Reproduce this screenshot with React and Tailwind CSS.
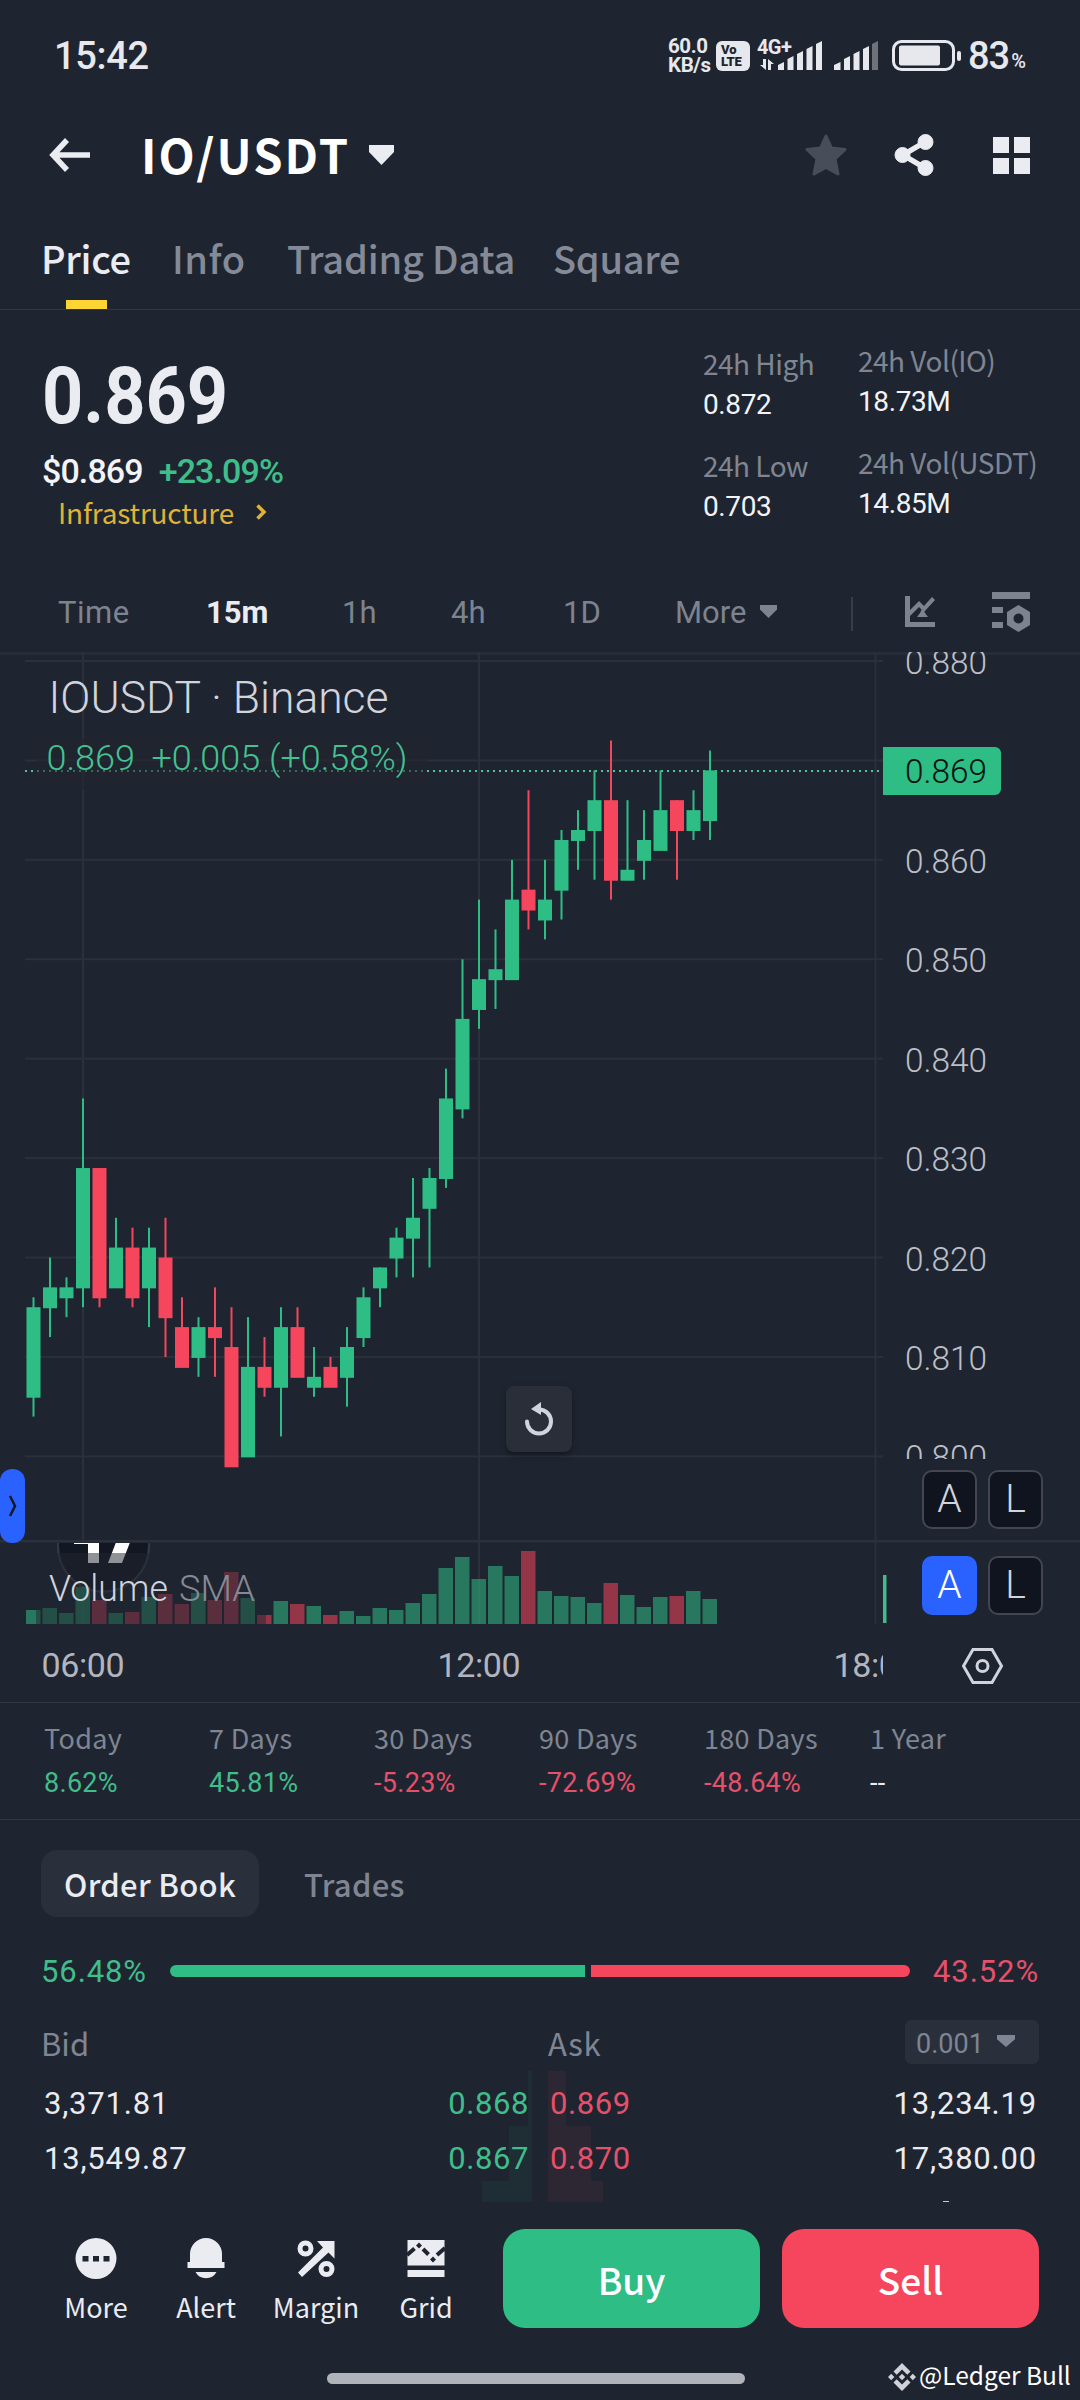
import React from 'react';

// i-th entry: open, close, high, low (in thousandths) and volume bar height
const CANDLES = [
  [806, 815, 816, 804, 14], [815, 817, 820, 812, 16], [816, 817, 818, 814, 11],
  [817, 829, 836, 815, 37], [829, 816, 829, 815, 24], [817, 821, 824, 817, 11],
  [821, 816, 823, 815, 12], [817, 821, 823, 813, 27], [820, 814, 824, 810, 30],
  [813, 809, 816, 809, 20], [810, 813, 814, 808, 31], [813, 812, 817, 808, 24],
  [811, 799, 815, 799, 52], [800, 809, 814, 800, 26], [809, 807, 812, 806, 9],
  [807, 813, 815, 802, 23], [813, 808, 815, 808, 20], [807, 808, 811, 806, 18],
  [809, 807, 810, 807, 9], [808, 811, 813, 805, 13], [812, 816, 817, 811, 8],
  [817, 819, 819, 815, 16], [820, 822, 823, 818, 14], [822, 824, 828, 818, 21],
  [825, 828, 829, 819, 30], [828, 836, 839, 827, 56], [835, 844, 850, 834, 67],
  [845, 848, 856, 843, 45], [848, 849, 853, 845, 58], [848, 856, 860, 848, 48],
  [857, 855, 867, 853, 73], [854, 856, 860, 852, 33], [857, 862, 863, 854, 28],
  [862, 863, 865, 859, 27], [863, 866, 869, 858, 21], [866, 858, 872, 856, 41],
  [858, 859, 866, 858, 29], [860, 862, 865, 858, 17], [861, 865, 869, 861, 27],
  [866, 863, 866, 858, 28], [863, 865, 867, 862, 33], [864, 869, 871, 862, 25],
];

const PRICE_TICKS = [880, 870, 860, 850, 840, 830, 820, 810, 800];
const TIME_TICKS = [83, 479, 875.5];

const GREEN = '#2ebd85';
const RED = '#f6465d';

const priceToY = (p) => 9 + (880 - p) * 9.942;
const candleX = (i) => 33.5 + i * 16.5;

const Caret = ({ className }) => (
  <svg className={className} viewBox="0 0 25 20" preserveAspectRatio="none" fill="currentColor">
    <path d="M0 0h25v7L12.5 20 0 7z" />
  </svg>
);

const StatusBar = () => (
  <div className="flex h-[111px] items-center pl-[54px] font-['Roboto',sans-serif] text-[#e6e8ee]">
    <span className="w-[614px] text-[38px] leading-none font-medium tracking-[-0.3px]">15:42</span>
    <div className="w-[48px] text-[20.5px] leading-[19px] font-bold tracking-[-0.4px]">
      <div>60.0</div>
      <div>KB/s</div>
    </div>
    <div className="h-[30px] w-[34px] rounded-[6px] bg-[#e6e8ee] pt-[3px] pl-[5px] text-[13px] leading-[12px] font-black text-[#1f2530]">
      <div>Vo</div>
      <div className="tracking-[-0.2px]">LTE</div>
    </div>
    <div className="relative ml-[7px] h-[34px] w-[69px]">
      <span className="absolute top-[-1px] left-0 text-[20px] leading-[18px] font-bold tracking-[-0.6px]">4G+</span>
      <svg className="h-[34px] w-[69px]" viewBox="0 0 69 34" fill="currentColor">
        <path d="M6 20h3v11L3 26h3zM11 31V20l6 5h-3v6z" />
        <path d="M21 31v-5l6-3v8zM30.500 31V20l6-3v14zM40 31V15l6-3v19zM49.500 31V10l6-3v24zM59 31V5l6-3v29z" />
      </svg>
    </div>
    <svg className="ml-[8px] h-[34px] w-[46px]" viewBox="0 0 46 34" fill="currentColor">
      <path d="M0 31v-5l6.500-3v8zM10 31V20l6-3v14zM19.500 31V15l6-3v19zM29 31V10l6-3v24z" />
      <path d="M38 31V5l6-3v29z" opacity="0.4" />
    </svg>
    <svg className="ml-[12px] h-[34px] w-[70px]" viewBox="0 0 70 34" fill="none">
      <rect x="1.5" y="2.500" width="60" height="28" rx="8" stroke="currentColor" strokeWidth="3" />
      <rect x="7" y="6.500" width="41" height="20" rx="2" fill="currentColor" />
      <rect x="65" y="12" width="4" height="10" rx="2" fill="currentColor" />
    </svg>
    <span className="ml-[6px] text-[38px] leading-none font-medium tracking-[-1px]">83</span>
    <span className="mt-[10px] ml-[2px] text-[20px] leading-none font-medium tracking-[-1px]">%</span>
  </div>
);

const Header = () => (
  <div className="flex h-[88px] items-center pr-[49px] pl-[49px] text-[#eaecf1]">
    <svg className="h-[34px] w-[42px]" viewBox="0 0 42 34" fill="none" stroke="currentColor" strokeWidth="5.500">
      <path d="M4 17h37M18 2 4 17l14 15" />
    </svg>
    <h1 className="ml-[50px] w-[228px] pb-[4px] text-[47px] leading-none font-bold tracking-[2.1px] text-white">
      IO/USDT
    </h1>
    <Caret className="h-[20px] w-[25px]" />
    <svg className="ml-[411px] h-[44px] w-[42px] text-[#474d59]" viewBox="0 0 42 44">
      <path
        d="M21 3l5.500 12 13.500 1.500-10 9.500 3 15L21 34.500 9 41l3-15L2 16.500 15.500 15z"
        fill="currentColor"
        stroke="currentColor"
        strokeWidth="3"
        strokeLinejoin="round"
      />
    </svg>
    <svg className="ml-[47px] h-[44px] w-[40px]" viewBox="0 0 40 44" fill="currentColor" stroke="currentColor">
      <path d="M31 9 9 22l22 13" fill="none" strokeWidth="5.500" />
      <circle cx="31.500" cy="9" r="7.500" />
      <circle cx="8.500" cy="22" r="7.500" />
      <circle cx="31.500" cy="35" r="7.500" />
    </svg>
    <div className="ml-auto grid grid-cols-2 gap-[5px] pr-[1px]">
      <i className="h-[16px] w-[16px] bg-current" />
      <i className="h-[16px] w-[16px] bg-current" />
      <i className="h-[16px] w-[16px] bg-current" />
      <i className="h-[16px] w-[16px] bg-current" />
    </div>
  </div>
);

const Tabs = () => (
  <div className="flex h-[111px] items-start border-b border-[#303743] pt-[39px] pl-[41px] text-[38px] leading-[40px] font-medium tracking-[-0.3px] text-[#848a97]">
    <div className="flex w-[131px] flex-col text-[#eaecf1]">
      <span>Price</span>
      <span className="mt-[22px] ml-[25px] h-[9px] w-[41px] bg-[#fcd535]" />
    </div>
    <span className="w-[115px] tracking-[0.5px]">Info</span>
    <span className="w-[266px] tracking-[-0.2px]">Trading Data</span>
    <span>Square</span>
  </div>
);

const Stat = ({ label, value }) => (
  <div className="mb-[20px] text-[28px] leading-[41px]">
    <div className="tracking-[-0.5px] whitespace-nowrap text-[#7f8593]">{label}</div>
    <div className="pt-px font-['Roboto',sans-serif] leading-[40px] tracking-[-0.4px] text-[#f2f4f8]">{value}</div>
  </div>
);

const PriceSummary = () => (
  <div className="flex h-[265px]">
    <div className="w-[703px] pt-[46px] pl-[42px]">
      <div className="origin-left scale-x-[0.9] font-['Roboto',sans-serif] text-[80px] leading-[80px] font-bold text-[#eaecf1]">
        0.869
      </div>
      <div className="mt-[15px] flex gap-[16px] font-['Roboto',sans-serif] text-[34px] leading-[40px] font-medium tracking-[-0.9px]">
        <span className="text-[#f2f4f8]">$0.869</span>
        <span className="text-[#3fbd8b]">+23.09%</span>
      </div>
      <div className="mt-[3px] flex items-center pl-[16px] text-[28px] leading-[36px] tracking-[-0.2px] text-[#dfb238]">
        Infrastructure
        <svg className="ml-[22px] h-[16px] w-[11px]" viewBox="0 0 11 16" fill="none" stroke="currentColor" strokeWidth="3.500">
          <path d="m1.500 1.500 6.500 6.500-6.500 6.500" />
        </svg>
      </div>
    </div>
    <div className="w-[155px] pt-[33px]">
      <Stat label="24h High" value="0.872" />
      <Stat label="24h Low" value="0.703" />
    </div>
    <div className="pt-[30px]">
      <Stat label="24h Vol(IO)" value="18.73M" />
      <Stat label="24h Vol(USDT)" value="14.85M" />
    </div>
  </div>
);

const IntervalBar = () => (
  <div className="grid h-[77px] grid-cols-[148px_136px_109px_112px_112px_176px_54px_87px_40px] items-center pl-[58px] font-['Roboto',sans-serif] text-[31px] text-[#7d838f]">
    <span className="tracking-[0.5px]">Time</span>
    <span className="font-bold text-[#eaecf1]">15m</span>
    <span>1h</span>
    <span>4h</span>
    <span>1D</span>
    <span className="flex items-center gap-[14px]">
      More
      <Caret className="mb-[5px] h-[13px] w-[17px]" />
    </span>
    <span className="h-[34px] w-[2px] bg-[#373d49]" />
    <svg className="mb-[5px] h-[31px] w-[31px]" viewBox="0 0 31 31" fill="currentColor">
      <path d="M0 0h5v26h25v5H0z" />
      <path d="M4 15 14 5l5 5 8-9 3 3-11 12-5-5-9 9z" />
      <path d="m17.500 12 2.500 5 3 4h-11l3-4z" />
    </svg>
    <svg className="mb-[4px] h-[40px] w-[38px]" viewBox="0 0 38 40" fill="currentColor">
      <path d="M0 0h38v7H0zM0 15h11v6H0zM0 30h11v6H0z" />
      <path fillRule="evenodd" d="m26.500 13 11.500 7v13l-11.500 7L15 33V20zm0 8.500a5 5 0 1 0 0 10 5 5 0 0 0 0-10z" />
    </svg>
  </div>
);

const ChartCanvas = () => (
  <svg className="block h-[1050px] w-[1080px] font-['Roboto',sans-serif]" viewBox="0 0 1080 1050">
    <rect width="1080" height="3" fill="#272d38" />

    {/* grid */}
    <g fill="#2b303b">
      {PRICE_TICKS.map((p) => (
        <rect key={p} x="25" y={priceToY(p) - 1} width="858" height="2" />
      ))}
      {TIME_TICKS.map((x) => (
        <rect key={x} x={x - 1} y="0" width="2" height="972" />
      ))}
      <rect x="0" y="888" width="1080" height="2.500" />
    </g>

    <line x1="25" x2="883" y1="119" y2="119" stroke="#4fc497" strokeWidth="2" strokeDasharray="2 4" />

    {/* candles */}
    {CANDLES.map(([open, close, high, low], i) => {
      const x = candleX(i);
      const top = priceToY(Math.max(open, close));
      const bottom = priceToY(Math.min(open, close));
      return (
        <g key={i} fill={close >= open ? GREEN : RED}>
          <rect x={x - 1} y={priceToY(high)} width="2" height={priceToY(low) - priceToY(high)} />
          <rect x={x - 7} y={top} width="14" height={bottom - top + 1} />
        </g>
      );
    })}

    {/* library badge, cut by the pane edge */}
    <clipPath id="volumePane">
      <rect x="0" y="891" width="883" height="82" />
    </clipPath>
    <g clipPath="url(#volumePane)">
      <circle cx="103.500" cy="894" r="45.500" fill="#131722" stroke="#363a45" strokeWidth="2" />
      <path d="M74 880h25v31H88v-19H74zM120 880h14l-12 31h-14z" fill="#fff" />
    </g>

    {/* volume */}
    {CANDLES.map(([open, close, , , volume], i) => (
      <rect
        key={i}
        x={candleX(i) - 7.5}
        y={972 - volume}
        width="14.500"
        height={volume}
        fill={close >= open ? GREEN : RED}
        opacity="0.55"
      />
    ))}
    <rect x="883" y="923" width="3.500" height="48" fill="#45b88c" />

    {/* legends */}
    <rect x="36" y="86" width="391" height="52" fill="#1f2530" opacity="0.55" />
    <rect x="36" y="901" width="230" height="71" fill="#1f2530" opacity="0.5" />
    <g fontWeight="300">
      <text x="48.500" y="61" fontSize="45" fill="#d1d4dc" textLength="340" lengthAdjust="spacingAndGlyphs">
        IOUSDT · Binance
      </text>
      <g fontSize="35.500" fill="#45c191">
        <text x="46.500" y="117.500" textLength="88.500" lengthAdjust="spacingAndGlyphs">0.869</text>
        <text x="151.500" y="117.500" textLength="256" lengthAdjust="spacingAndGlyphs">+0.005 (+0.58%)</text>
      </g>
      <text x="49" y="949" fontSize="36" fill="#d1d4dc" textLength="119" lengthAdjust="spacingAndGlyphs">Volume</text>
      <text x="179" y="949" fontSize="36" fill="#868a95" textLength="76" lengthAdjust="spacingAndGlyphs">SMA</text>
    </g>

    {/* price axis */}
    <clipPath id="priceAxis">
      <rect x="883" y="0" width="197" height="807" />
    </clipPath>
    <g clipPath="url(#priceAxis)" fontSize="34" fontWeight="300" fill="#bcbfc8">
      {PRICE_TICKS.filter((p) => p !== 870).map((p) => (
        <text key={p} x="905" y={priceToY(p) + 13} textLength="82" lengthAdjust="spacingAndGlyphs">
          0.{p}
        </text>
      ))}
    </g>
    <path d="M883 95h112a6 6 0 0 1 6 6v36a6 6 0 0 1-6 6H883z" fill={GREEN} />
    <text
      x="905"
      y="131"
      fontSize="34"
      fontWeight="300"
      fill="#06120f"
      textLength="82"
      lengthAdjust="spacingAndGlyphs"
    >
      0.869
    </text>

    {/* time axis */}
    <clipPath id="timeAxis">
      <rect x="0" y="973" width="883" height="77" />
    </clipPath>
    <g clipPath="url(#timeAxis)" fontSize="34" fill="#b2b5be">
      <text x="41.500" y="1025" textLength="83">06:00</text>
      <text x="437.500" y="1025" textLength="83">12:00</text>
      <text x="833.500" y="1025" textLength="83">18:00</text>
    </g>
    <g fill="none" stroke="#d1d4dc" strokeWidth="3">
      <path d="M973 997.500h19l9.500 16.500-9.500 16.500h-19l-9.500-16.500z" />
      <circle cx="982.500" cy="1014" r="5.500" />
    </g>
  </svg>
);

const ScaleButton = ({ children, active }) => (
  <span
    className={`flex h-[59px] w-[55px] items-center justify-center rounded-[10px] border-2 text-[39px] leading-none font-light ${
      active ? 'border-[#2962ff] bg-[#2962ff] text-white' : 'border-[#434651] bg-[#10141f] text-[#d1d4dc]'
    }`}
  >
    {children}
  </span>
);

const Chart = () => (
  <div className="relative h-[1051px] border-b border-[#303743] font-['Roboto',sans-serif]">
    <ChartCanvas />
    <div className="absolute top-[818px] left-[922px] flex gap-[11px]">
      <ScaleButton>A</ScaleButton>
      <ScaleButton>L</ScaleButton>
    </div>
    <div className="absolute top-[904px] left-[922px] flex gap-[11px]">
      <ScaleButton active>A</ScaleButton>
      <ScaleButton>L</ScaleButton>
    </div>
    {/* reset zoom */}
    <div className="absolute top-[734px] left-[506px] flex h-[66px] w-[66px] items-center justify-center rounded-[8px] bg-[#2a2e39] shadow-[0_3px_6px_rgba(0,0,0,0.4)]">
      <svg className="h-[36px] w-[30px]" viewBox="0 0 30 36" fill="none" stroke="#d1d4dc" strokeWidth="4">
        <path d="M3 20.500a12 12 0 1 0 12-12" strokeLinecap="round" />
        <path d="M17 1v13L7 8z" fill="#d1d4dc" stroke="none" />
      </svg>
    </div>
    {/* drawer handle */}
    <div className="absolute top-[817px] left-0 flex h-[74px] w-[25px] items-center justify-center rounded-[12px] bg-[#2962ff]">
      <svg className="h-[22px] w-[10px]" viewBox="0 0 10 22" fill="none" stroke="#131722" strokeWidth="2.500">
        <path d="m2 1 5 10-5 10" />
      </svg>
    </div>
  </div>
);

const PERFORMANCE = [
  { label: 'Today', value: '8.62%', color: 'text-[#3fbd8b]' },
  { label: '7 Days', value: '45.81%', color: 'text-[#3fbd8b]' },
  { label: '30 Days', value: '-5.23%', color: 'text-[#e5506a]' },
  { label: '90 Days', value: '-72.69%', color: 'text-[#e5506a]' },
  { label: '180 Days', value: '-48.64%', color: 'text-[#e5506a]' },
  { label: '1 Year', value: '--', color: 'text-[#eaecf1]' },
];

const Performance = () => (
  <div className="grid h-[117px] grid-cols-[165px_165px_165px_165px_166px_165px] border-b border-[#303743] pt-[13px] pl-[44px]">
    {PERFORMANCE.map(({ label, value, color }) => (
      <div key={label} className="text-[27px] leading-[44px] tracking-[0.3px]">
        <div className="text-[#7f8593]">{label}</div>
        <div className={`pt-px font-['Roboto',sans-serif] ${color}`}>{value}</div>
      </div>
    ))}
  </div>
);

const BIDS = [
  { amount: '3,371.81', price: '0.868', depth: 4 },
  { amount: '13,549.87', price: '0.867', depth: 23 },
];
const ASKS = [
  { amount: '13,234.19', price: '0.869', depth: 18 },
  { amount: '17,380.00', price: '0.870', depth: 43 },
];

const OrderRow = ({ side, amount, price, depth }) => {
  const isBid = side === 'bid';
  return (
    <div
      className={`relative flex h-[55px] justify-between pt-[11px] text-[31px] leading-[44px] ${
        isBid ? 'pr-[3px] pl-[3px]' : 'flex-row-reverse pr-[2px] pl-[2px]'
      }`}
    >
      <span
        className={`absolute top-0 h-full ${isBid ? 'right-0 bg-[#1f2e35]' : 'left-0 bg-[#2c2733]'}`}
        style={{ width: depth }}
      />
      <span className="relative tracking-[0.8px] text-[#eaecf1]">{amount}</span>
      <span className={`relative tracking-[0.6px] ${isBid ? 'text-[#3fbd8b]' : 'text-[#e5506a]'}`}>{price}</span>
    </div>
  );
};

const OrderBook = () => (
  <div className="h-[382px] overflow-hidden pt-[30px] pr-[41px] pl-[41px]">
    <div className="flex items-center text-[31px] leading-none font-medium">
      <span className="flex h-[67px] w-[218px] items-center justify-center rounded-[16px] bg-[#29303c] tracking-[0.3px] text-[#eaecf1]">
        Order Book
      </span>
      <span className="ml-[45px] tracking-[0.3px] text-[#7f8593]">Trades</span>
    </div>

    <div className="mt-[34px] flex h-[40px] items-center font-['Roboto',sans-serif] text-[31px] leading-none tracking-[0.9px]">
      <span className="w-[129px] text-[#3fbd8b]">56.48%</span>
      <span className="h-[12px] w-[415px] rounded-l-[6px] bg-[#2ebd85]" />
      <span className="ml-[6px] h-[12px] w-[319px] rounded-r-[6px] bg-[#f6465d]" />
      <span className="ml-auto text-[#e5506a]">43.52%</span>
    </div>

    <div className="mt-[29px] flex h-[44px] items-center text-[31px] leading-none text-[#7f8593]">
      <span className="w-[507px]">Bid</span>
      <span className="tracking-[0.7px]">Ask</span>
      <span className="ml-auto flex h-[44px] w-[134px] items-center rounded-[6px] bg-[#29303c] pl-[11px] font-['Roboto',sans-serif] text-[27px]">
        <span className="pt-[4px]">0.001</span>
        <Caret className="mb-[3px] ml-[13px] h-[12px] w-[18px]" />
      </span>
    </div>

    <div className="mt-[7px] flex gap-[16px] font-['Roboto',sans-serif]">
      <div className="w-[491px]">
        {BIDS.map((b) => (
          <OrderRow key={b.price} side="bid" {...b} />
        ))}
        <div className="ml-auto h-[21px] w-[50px] bg-[#1f2e35]" />
      </div>
      <div className="w-[491px]">
        {ASKS.map((a) => (
          <OrderRow key={a.price} side="ask" {...a} />
        ))}
        <div className="flex h-[21px] items-end">
          <span className="h-[21px] w-[55px] bg-[#2c2733]" />
          <span className="ml-[340px] h-px w-[6px] bg-[#c8cbd2]" />
        </div>
      </div>
    </div>
  </div>
);

const ACTIONS = [
  {
    label: 'More',
    icon: (
      <path fillRule="evenodd" d="M21 1a20.500 20.500 0 1 1 0 41 20.500 20.500 0 0 1 0-41zM7.500 19v5.500h6V19zm10.500 0v5.500h6V19zm10.500 0v5.500h6V19z" />
    ),
  },
  {
    label: 'Alert',
    icon: <path d="M2.500 31v-6H5v-8a16 16 0 0 1 32 0v8h2.500v6zM10.500 35h21a12 12 0 0 1-21 0z" />,
  },
  {
    label: 'Margin',
    icon: (
      <g>
        <path d="M22 4h17.500v17.500l-6-6L7 40l-4-4.500 25-25z" />
        <circle cx="10.500" cy="11.500" r="5.500" fill="none" stroke="currentColor" strokeWidth="5" />
        <circle cx="31.500" cy="32" r="5.500" fill="none" stroke="currentColor" strokeWidth="5" />
      </g>
    ),
  },
  {
    label: 'Grid',
    icon: (
      <g>
        <path d="M2.500 3h37v25.500h-37zM2.500 33h37v7h-37z" />
        <path d="m2 18 7.500-6.500M18 12l5.500 5.500M32 18l8-7" fill="none" stroke="#1f2530" strokeWidth="4" />
        <path d="m14 5.500 3 3-3 3-3-3zM28 19.500l3 3-3 3-3-3z" fill="#1f2530" />
      </g>
    ),
  },
];

const BottomBar = () => (
  <div className="flex h-[143px] items-start pt-[27px] pl-[41px]">
    {ACTIONS.map(({ label, icon }) => (
      <div key={label} className="flex w-[110px] flex-col items-center pt-[8px] text-[#eaecf1]">
        <svg className="h-[43px] w-[42px]" viewBox="0 0 42 43" fill="currentColor">
          {icon}
        </svg>
        <span className="mt-[9px] text-[27px] leading-[36px]">{label}</span>
      </div>
    ))}
    <button className="ml-[22px] h-[99px] w-[257px] rounded-[22px] bg-[#2ebd85] pt-[2px] text-[37px] font-medium text-white">
      Buy
    </button>
    <button className="ml-[22px] h-[99px] w-[257px] rounded-[22px] bg-[#f6465d] pt-[2px] text-[37px] font-medium text-white">
      Sell
    </button>
  </div>
);

const HomeIndicator = () => (
  <div className="flex h-[55px] items-start pt-[14px] pl-[327px]">
    <div className="mt-[14px] h-[11px] w-[418px] rounded-full bg-[#b0b3b9]" />
    <div className="ml-[143px] flex items-center text-[24.5px] leading-[30px] text-white">
      <svg className="mt-[4px] mr-[3px] h-[28px] w-[28px] text-[#cfd2d8]" viewBox="0 0 28 28" fill="currentColor">
        <path d="m14 0 8.500 8.500-3.200 3.200L14 6.400l-5.300 5.300-3.200-3.200zM14 28l-8.500-8.500 3.200-3.200 5.300 5.300 5.300-5.300 3.200 3.200zM3.200 10.800 6.400 14l-3.200 3.200L0 14zM24.800 10.800 28 14l-3.200 3.200-3.200-3.200zM14 10.800l3.200 3.200-3.200 3.200-3.200-3.200z" />
      </svg>
      @Ledger Bull
    </div>
  </div>
);

const App = () => {
  return (
    <div className="h-[2400px] w-[1080px] overflow-hidden bg-[#1f2530] font-['Noto_Sans_CJK_SC',sans-serif]">
      <StatusBar />
      <Header />
      <Tabs />
      <PriceSummary />
      <IntervalBar />
      <Chart />
      <Performance />
      <OrderBook />
      <BottomBar />
      <HomeIndicator />
    </div>
  );
};

export default App;
